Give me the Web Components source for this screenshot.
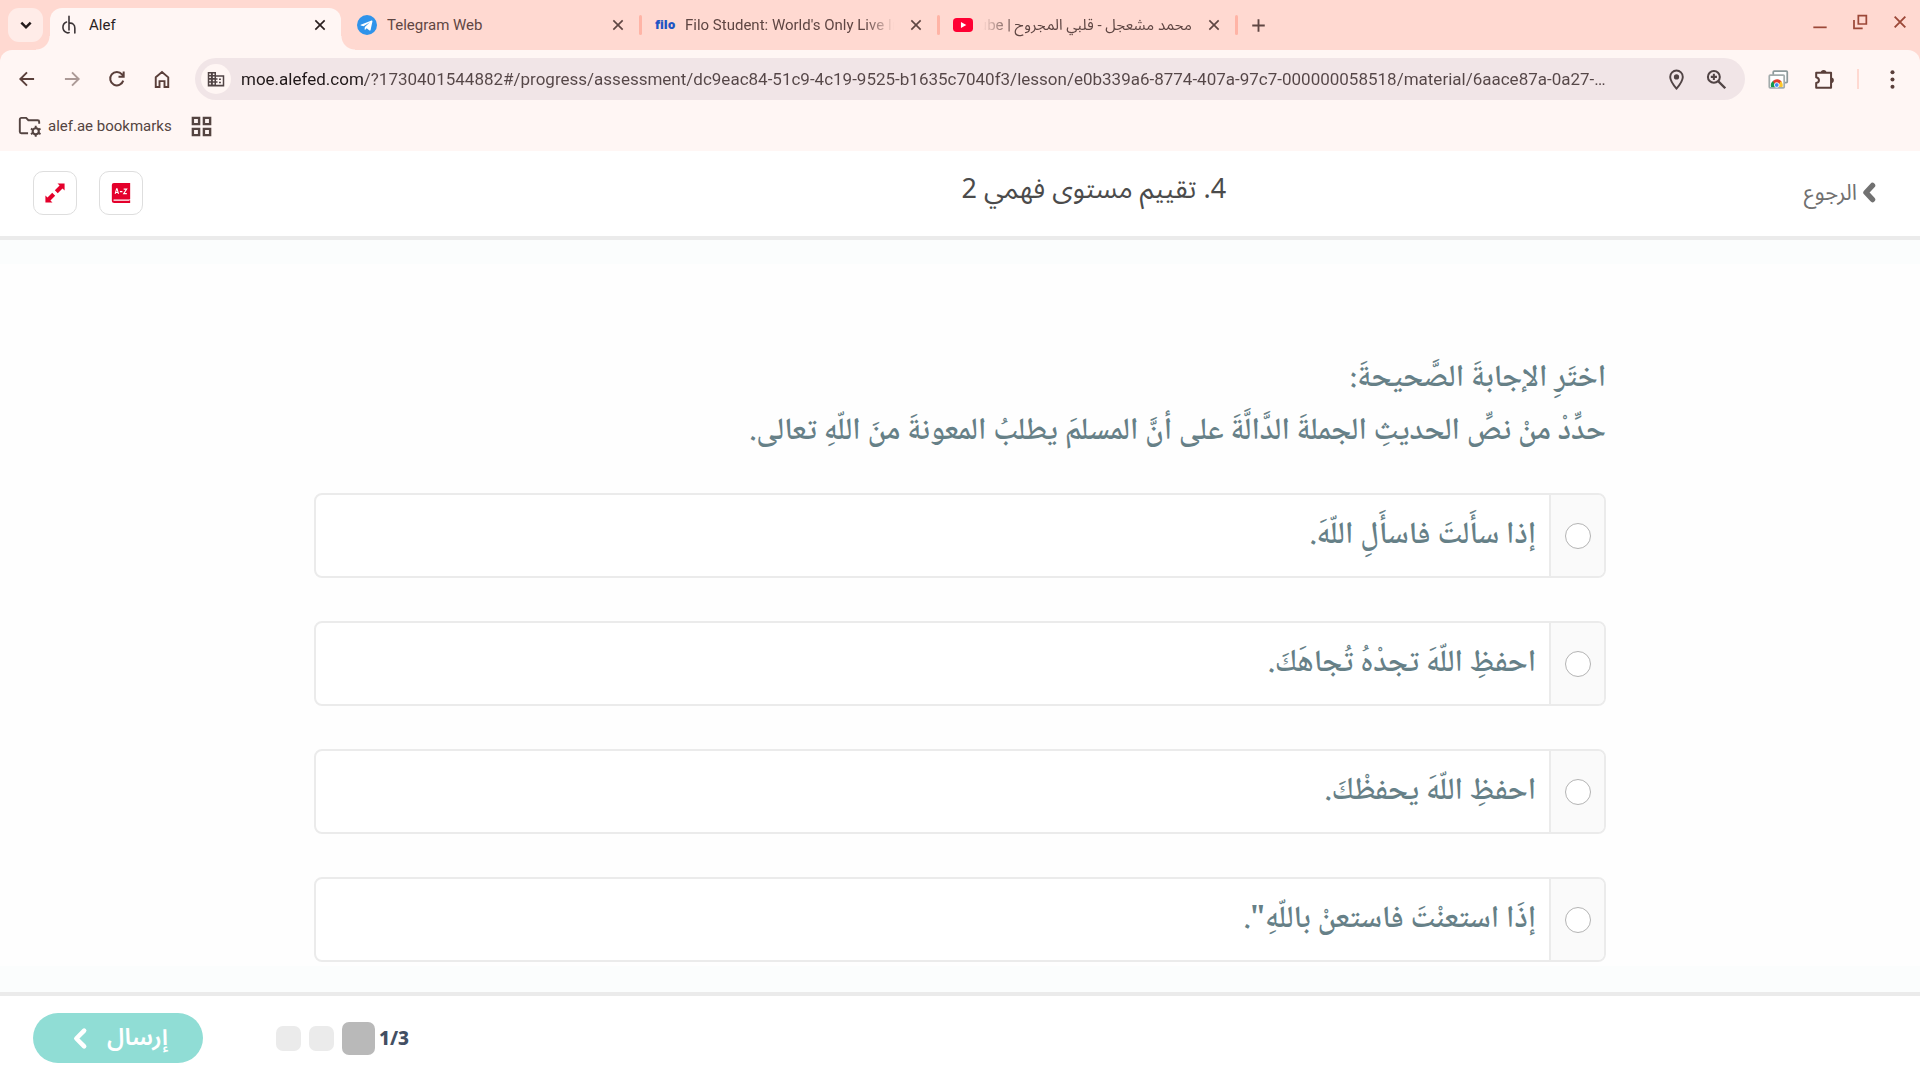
<!DOCTYPE html>
<html lang="ar">
<head>
<meta charset="utf-8">
<meta name="viewport" content="width=device-width, initial-scale=1">
<title>Alef</title>
<style>
  html, body { height: 100%; margin: 0; }
  body { font-family: Roboto, "Noto Sans Arabic", "DejaVu Sans", sans-serif; background: #fefefe; }
</style>
</head>
<body>
<alef-window></alef-window>

<script>
const ICONS = {
  chevronDown: '<path d="M5 8.500l7 7 7-7" fill="none" stroke="currentColor" stroke-width="3.800"/>',
  close: '<path d="M4 4l16 16M20 4L4 20" fill="none" stroke="currentColor" stroke-width="2.800"/>',
  plus: '<path d="M12 2v20M2 12h20" fill="none" stroke="currentColor" stroke-width="3"/>',
  alef: '<path d="M12 1.500v16.500M9 8.500a6.700 6.700 0 0 0 0 12.500c1 .5 2.200.5 3.200 0M12 10c4.500-1 7 2 7 5.500v6" fill="none" stroke="#3b3436" stroke-width="1.900" stroke-linecap="round"/>',
  telegram: '<circle cx="12" cy="12" r="12" fill="#2f93ea"/><path d="M4.500 11.800l13-5.300c.7-.2 1.200.2 1 1.200l-2.200 10.200c-.2.9-.7 1-1.400.6l-3.300-2.500-1.700 1.600c-.4.3-.8.2-.8-.4l.3-2.900 6-5.500-7.500 4.700-3.200-1c-.7-.2-.7-.5-.2-.7z" fill="#fff"/>',
  youtube: '<rect x="0" y="3.500" width="24" height="17" rx="4.500" fill="#ff0033"/><path d="M9.500 8.300v7.400l6.500-3.700z" fill="#fff"/>',
  minimize: '<path d="M2 20h20" stroke="currentColor" stroke-width="2.600"/>',
  restore: '<path d="M9.500 2.500h12v12.500h-12zM3 9v12.500h13" fill="none" stroke="currentColor" stroke-width="2.600"/>',
  back: '<path d="M20.500 12H4M12 4L4 12l8 8" fill="none" stroke="currentColor" stroke-width="2.300"/>',
  forward: '<path d="M3.500 12H20M12 4l8 8-8 8" fill="none" stroke="currentColor" stroke-width="2.300"/>',
  reload: '<path d="M19.500 14A8 8 0 1 1 18 6.500l1.500 1.700M20 3v6.200h-6.200" fill="none" stroke="currentColor" stroke-width="2.400"/>',
  home: '<path d="M4.500 10L12 3.500l7.500 6.500V21.500H15V14.500H9v7H4.500z" fill="none" stroke="currentColor" stroke-width="2.300"/>',
  building: '<path fill-rule="evenodd" fill="currentColor" d="M1 2.500h11V7h11v15H1zm2 2v2h2.200v-2zm0 4.200v2h2.200v-2zm0 4.200v2h2.200v-2zm0 4.200v2.200h2.200v-2.200zm4.800-12.600v2H10v-2zm0 4.200v2H10v-2zm0 4.200v2H10v-2zm0 4.200v2.200H10v-2.200zM12 9v2h2v2h-2v2h2v2h-2v2.800h9V9zm4 2.300h2.500v2H16zm0 4.200h2.500v2H16z"/>',
  pin: '<path d="M12 22.300C7.500 17 4.800 13 4.800 9a7.200 7.200 0 0 1 14.400 0c0 4-2.700 8-7.200 13.300z" fill="none" stroke="currentColor" stroke-width="2.200"/><circle cx="12" cy="9" r="3" fill="currentColor"/>',
  zoom: '<circle cx="9" cy="9" r="6.800" fill="none" stroke="currentColor" stroke-width="2.300"/><path d="M9 5.500v7M5.500 9h7" stroke="currentColor" stroke-width="2.300"/><path d="M14 14l8 8" stroke="currentColor" stroke-width="2.800"/>',
  tabs: '<rect x="6" y="2.500" width="16" height="13" rx="1" fill="#fff" stroke="#8d9a9b" stroke-width="2"/><rect x="1.500" y="7" width="17" height="14.500" rx="1" fill="#fff" stroke="#a3acac" stroke-width="2"/><path d="M3.500 20.500a6.500 6.500 0 0 1 3-7.300l3.300 5v2.300z" fill="#159a4a"/><path d="M5.500 14a6.500 6.500 0 0 1 10 .2l-2 3.300H8z" fill="#e23d2e"/><path d="M15 14a6.500 6.500 0 0 1 1.500 6.500h-5l2-5z" fill="#fcc62b"/><circle cx="10" cy="18.300" r="2.700" fill="#438af5" stroke="#fff" stroke-width="1"/>',
  puzzle: '<path d="M2.500 4.300h17v17H2.500v-5.200c4.200-1 4.200-5.600 0-6.600z" fill="none" stroke="currentColor" stroke-width="2.300" stroke-linejoin="round"/><path d="M7.800 4.300a3.200 3.200 0 0 1 6.400 0zM19.500 9.600a3.200 3.200 0 0 1 0 6.400z" fill="currentColor"/>',
  dots: '<circle cx="12" cy="3.600" r="2.300" fill="currentColor"/><circle cx="12" cy="12" r="2.300" fill="currentColor"/><circle cx="12" cy="20.400" r="2.300" fill="currentColor"/>',
  folder: '<path d="M10.500 19H3.500a1.600 1.600 0 0 1-1.600-1.600V4.600A1.600 1.600 0 0 1 3.500 3h5l2.300 2.500h9.700a1.600 1.600 0 0 1 1.600 1.600v2" fill="none" stroke="currentColor" stroke-width="2"/><circle cx="18.500" cy="17" r="3.200" fill="none" stroke="currentColor" stroke-width="2.200"/><path d="M18.500 11.300v2.200M18.500 20.500v2.200M13.500 14.200l2 1.200M21.500 18.700l2 1.200M13.500 19.900l2-1.200M21.500 15.400l2-1.200" stroke="currentColor" stroke-width="2"/>',
  apps: '<path d="M3 3h6.500v6.500H3zM14.500 3H21v6.500h-6.500zM3 14.500h6.500V21H3zM14.500 14.500H21V21h-6.500z" fill="none" stroke="currentColor" stroke-width="2.500"/>',
  expand: '<path d="M15 .500h8.500V9L21 6.500l-5.700 5.700-3.500-3.500L17.500 3zM.500 15L3 17.500l5.700-5.700 3.500 3.500L6.500 21 9 23.500H.500z" fill="currentColor"/><path d="M8.500 8.500l7 7" stroke="#fff" stroke-width="2.200"/>',
  dictionary: '<path d="M3.500 0H23v19.500h-1v1.300h1V24H4a3 3 0 0 1-3-3V2.500A2.500 2.500 0 0 1 3.500 0z" fill="currentColor"/><path d="M3.500 19.800H22v1.400H3.500a.7.7 0 0 1 0-1.400z" fill="#fff"/><path d="M5 13l1.700-6h.6L9 13M5.600 11.300h2.800M10.700 10.300h3M15.200 7.300h3.600l-3.600 5.400h3.800" fill="none" stroke="#fff" stroke-width="1.300"/>',
  angleLeft: '<path d="M15.500 4.500L8 12l7.500 7.500" fill="none" stroke="currentColor" stroke-width="4.400" stroke-linecap="round" stroke-linejoin="round"/>'
};

class UiIcon extends HTMLElement {
  constructor() {
    super();
    this.attachShadow({ mode: "open" });
  }

  connectedCallback() {
    this.shadowRoot.innerHTML =
      "<style>:host { display: inline-flex; flex: none; width: 20px; height: 20px; } svg { width: 100%; height: 100%; display: block; }</style>" +
      '<svg viewBox="0 0 24 24" aria-hidden="true">' + (ICONS[this.getAttribute("name")] || "") + "</svg>";
  }
}
customElements.define("ui-icon", UiIcon);

class BrowserTab extends HTMLElement {
  constructor() {
    super();
    this.attachShadow({ mode: "open" });
    this.shadowRoot.innerHTML = `
      <style>
        :host { display: flex; flex: 0 1 298px; min-width: 0; box-sizing: border-box; position: relative;
          padding: 8px 13px 0 14px; color: #5f4643; font-size: 15px; }
        .body { display: flex; flex: 1; min-width: 0; align-items: center; height: 34px; position: relative; }
        ::slotted([slot="icon"]) { flex: none; width: 20px; }
        .title { flex: 1; min-width: 0; margin: 0 12px 0 10px; line-height: 24px; overflow: hidden; white-space: nowrap; }
        :host([fade]) .title { -webkit-mask-image: linear-gradient(90deg, #000 86%, transparent); mask-image: linear-gradient(90deg, #000 86%, transparent); }
        :host([fade="start"]) .title { direction: rtl; -webkit-mask-image: linear-gradient(270deg, #000 86%, transparent); mask-image: linear-gradient(270deg, #000 86%, transparent); }
        button { flex: none; width: 20px; height: 20px; padding: 0; border: 0; background: none; color: inherit;
          display: grid; place-items: center; }
        button ui-icon { width: 14px; height: 14px; }
        :host([divider])::after { content: ""; position: absolute; right: -1px; top: 15px; width: 3px; height: 20px; background: #ffb4a6; border-radius: 2px; }
        .plate { display: none; }
        :host([active]) { color: #2a1f1f; }
        :host([active]) .plate { display: block; position: absolute; inset: 8px 2px 0 5px; background: #fff6f4; border-radius: 12px 12px 0 0; }
        .plate::before, .plate::after { content: ""; position: absolute; bottom: 0; width: 14px; height: 14px; }
        .plate::before { right: 100%; background: radial-gradient(circle at 0 0, transparent 13px, #fff6f4 14px); }
        .plate::after { left: 100%; background: radial-gradient(circle at 100% 0, transparent 13px, #fff6f4 14px); }
      </style>
      <div class="plate"></div>
      <div class="body">
        <slot name="icon"></slot>
        <div class="title"><slot></slot></div>
        <button type="button" aria-label="Close tab"><ui-icon name="close"></ui-icon></button>
      </div>`;
  }
}
customElements.define("browser-tab", BrowserTab);

class TabStrip extends HTMLElement {
  constructor() {
    super();
    this.attachShadow({ mode: "open" });
    this.shadowRoot.innerHTML = `
      <style>
        :host { display: flex; height: 50px; background: #ffd9d1; }
        button { padding: 0; border: 0; background: none; color: #5f4643; display: grid; place-items: center; flex: none; }
        .search { width: 35px; height: 34px; margin: 8px 2px 0 8px; border-radius: 11px; background: #ffece8; color: #241a1a; }
        .search ui-icon { width: 16px; height: 16px; }
        .new { width: 42px; height: 34px; margin-top: 8px; }
        .new ui-icon { width: 15px; height: 15px; }
        .filo { color: #1f55c4; font: 800 12px/20px "Open Sans", sans-serif; }
        .window { display: flex; gap: 24px; margin-left: auto; padding: 14px 12px 0 0; align-items: flex-start; }
        .window button { color: #9c4838; width: 16px; height: 16px; }
        .window ui-icon { width: 16px; height: 16px; }
      </style>
      <button class="search" type="button" aria-label="Search tabs"><ui-icon name="chevronDown"></ui-icon></button>
      <browser-tab active><ui-icon slot="icon" name="alef"></ui-icon>Alef</browser-tab>
      <browser-tab divider><ui-icon slot="icon" name="telegram"></ui-icon>Telegram Web</browser-tab>
      <browser-tab divider fade><span slot="icon" class="filo">filo</span>Filo Student: World's Only Live In</browser-tab>
      <browser-tab divider fade="start"><ui-icon slot="icon" name="youtube"></ui-icon>محمد مشعجل - قلبي المجروح | ube</browser-tab>
      <button class="new" type="button" aria-label="New tab"><ui-icon name="plus"></ui-icon></button>
      <div class="window">
        <button type="button" aria-label="Minimize"><ui-icon name="minimize"></ui-icon></button>
        <button type="button" aria-label="Restore"><ui-icon name="restore"></ui-icon></button>
        <button type="button" aria-label="Close"><ui-icon name="close"></ui-icon></button>
      </div>`;
  }
}
customElements.define("tab-strip", TabStrip);

class BrowserToolbar extends HTMLElement {
  constructor() {
    super();
    this.attachShadow({ mode: "open" });
    this.shadowRoot.innerHTML = `
      <style>
        :host { display: block; background: #ffd9d1; }
        .panel { background: #fff6f4; border-radius: 12px 12px 0 0; height: 101px; box-sizing: border-box; padding-top: 8px; }
        .row { display: flex; align-items: center; height: 42px; padding: 0 17px 0 16px; color: #5a3f3a; }
        button { padding: 0; border: 0; background: none; color: inherit; display: grid; place-items: center; }
        .nav { display: flex; gap: 23px; margin-right: 22px; }
        .nav button { width: 22px; height: 22px; }
        .off { opacity: 0.5; }
        .box { flex: 1; min-width: 0; height: 42px; border-radius: 21px; background: #f1e5e7; display: flex; align-items: center;
          box-sizing: border-box; padding: 0 18px 0 6px; color: #514445; }
        .site { width: 30px; height: 30px; border-radius: 50%; background: #fff6f4; }
        .site ui-icon { width: 18px; height: 18px; }
        input { flex: 1; min-width: 0; height: 24px; margin: 0 20px 0 10px; padding: 0; border: 0; outline: 0; font: 17px/24px Roboto, sans-serif;
          -webkit-text-fill-color: transparent; background: linear-gradient(90deg, #1f1718 124px, #554647 124px); -webkit-background-clip: text; background-clip: text; }
        .actions { display: flex; gap: 18px; }
        .actions button { width: 22px; height: 22px; }
        .actions ui-icon { width: 21px; height: 21px; }
        .tools { display: flex; align-items: center; gap: 24px; margin-left: 22px; }
        .tools button { width: 22px; height: 22px; }
        .tools ui-icon { width: 21px; height: 21px; }
        .rule { width: 2px; height: 20px; background: #ffd9d1; margin: 0 -2px; }
        .bookmarks { display: flex; align-items: center; gap: 18px; height: 50px; padding: 1px 18px 0; color: #544441; font-size: 15px; }
        .bookmarks a { display: flex; align-items: center; gap: 7px; color: inherit; text-decoration: none; line-height: 24px; }
        .bookmarks ui-icon { width: 23px; height: 23px; }
      </style>
      <div class="panel">
        <div class="row">
          <div class="nav">
            <button type="button" aria-label="Back"><ui-icon name="back"></ui-icon></button>
            <button type="button" class="off" aria-label="Forward"><ui-icon name="forward"></ui-icon></button>
            <button type="button" aria-label="Reload"><ui-icon name="reload"></ui-icon></button>
            <button type="button" aria-label="Home"><ui-icon name="home"></ui-icon></button>
          </div>
          <div class="box">
            <button class="site" type="button" aria-label="Site information"><ui-icon name="building"></ui-icon></button>
            <input type="text" aria-label="Address" spellcheck="false" value="moe.alefed.com/?1730401544882#/progress/assessment/dc9eac84-51c9-4c19-9525-b1635c7040f3/lesson/e0b339a6-8774-407a-97c7-000000058518/material/6aace87a-0a27-…">
            <div class="actions">
              <button type="button" aria-label="Location"><ui-icon name="pin"></ui-icon></button>
              <button type="button" aria-label="Zoom"><ui-icon name="zoom"></ui-icon></button>
            </div>
          </div>
          <div class="tools">
            <button type="button" aria-label="Tab groups"><ui-icon name="tabs"></ui-icon></button>
            <button type="button" aria-label="Extensions"><ui-icon name="puzzle"></ui-icon></button>
            <span class="rule"></span>
            <button type="button" aria-label="Menu"><ui-icon name="dots"></ui-icon></button>
          </div>
        </div>
        <div class="bookmarks">
          <a href="#bookmarks"><ui-icon name="folder"></ui-icon>alef.ae bookmarks</a>
          <a href="#apps" aria-label="Apps"><ui-icon name="apps"></ui-icon></a>
        </div>
      </div>`;
  }
}
customElements.define("browser-toolbar", BrowserToolbar);

class LessonHeader extends HTMLElement {
  constructor() {
    super();
    this.attachShadow({ mode: "open" });
    this.shadowRoot.innerHTML = `
      <style>
        :host { display: grid; grid-template-columns: 7fr auto 10fr; align-items: center; direction: rtl; height: 83px;
          flex: none; padding: 0 44px 2px 33px; background: #fff; border-bottom: 4px solid #ebebeb;
          font-family: "Noto Sans Arabic", "DejaVu Sans", sans-serif; }
        a { display: flex; align-items: center; gap: 5px; color: #717171; font-size: 22px; line-height: 32px; text-decoration: none; justify-self: start; }
        h1 { margin: 0; padding-bottom: 6px; font-size: 27px; font-weight: 400; line-height: 40px; color: #4b4b4b; }
        .tools { display: flex; gap: 22px; justify-self: end; direction: ltr; }
        button { width: 44px; height: 44px; padding: 0; border: 1px solid #dedede; border-radius: 10px; background: #fff; color: #e4002b;
          display: grid; place-items: center; }
        svg { width: 14px; height: 21px; }
      </style>
      <a href="#back"><svg viewBox="0 0 14 21" aria-hidden="true"><path d="M10.500 3.500L4 10.500l6.500 7" fill="none" stroke="currentColor" stroke-width="5.500" stroke-linecap="round" stroke-linejoin="round"/></svg>الرجوع</a>
      <h1><slot></slot></h1>
      <div class="tools">
        <button type="button" aria-label="Full screen"><ui-icon name="expand"></ui-icon></button>
        <button type="button" aria-label="Dictionary"><ui-icon name="dictionary"></ui-icon></button>
      </div>`;
  }
}
customElements.define("lesson-header", LessonHeader);

class AnswerOption extends HTMLElement {
  constructor() {
    super();
    this.attachShadow({ mode: "open" });
    this.shadowRoot.innerHTML = `
      <style>
        :host { display: block; }
        label { display: flex; height: 81px; border: 2px solid #ebebeb; border-radius: 8px; background: #fff; overflow: hidden; }
        .pick { display: grid; place-items: center; flex: none; width: 53px; background: #fafafa; border-left: 2px solid #ebebeb; }
        input { appearance: none; -webkit-appearance: none; width: 26px; height: 26px; margin: 0; border: 1px solid #b4b4b4; border-radius: 50%; background: #fff; }
        input:checked { background: radial-gradient(#8eddd5 8px, #fff 9px); }
        .text { flex: 1; padding: 18px 13px 0; line-height: 48px; }
      </style>
      <label>
        <span class="pick"><input type="radio" name="answer"></span>
        <span class="text"><slot></slot></span>
      </label>`;
  }
}
customElements.define("answer-option", AnswerOption);

class QuestionPanel extends HTMLElement {
  constructor() {
    super();
    this.attachShadow({ mode: "open" });
    this.shadowRoot.innerHTML = `
      <style>
        :host { display: block; flex: 1; min-height: 0; overflow: hidden; direction: rtl; box-sizing: border-box; padding: 113px 24px 0; color: #668087;
          background: linear-gradient(#fbfdfd, #fbfdfd) top / 100% 24px no-repeat, linear-gradient(#fbfdfd, #fbfdfd) bottom / 100% 26px no-repeat, #fefefe;
          font: 600 31px/53px "Noto Naskh Arabic", "DejaVu Sans", serif; }
        .column { max-width: 1292px; margin: 0 auto; }
        .options { display: flex; flex-direction: column; gap: 43px; margin-top: 34px; }
      </style>
      <div class="column">
        <slot name="question"></slot>
        <div class="options" role="radiogroup"><slot></slot></div>
      </div>`;
  }
}
customElements.define("question-panel", QuestionPanel);

class LessonFooter extends HTMLElement {
  constructor() {
    super();
    this.attachShadow({ mode: "open" });
    this.shadowRoot.innerHTML = `
      <style>
        :host { display: flex; align-items: center; gap: 73px; height: 84px; flex: none; box-sizing: content-box; padding: 0 33px; background: #fff; border-top: 4px solid #ebebeb; }
        .send { display: flex; align-items: center; justify-content: center; gap: 14px; width: 170px; height: 50px; padding: 0; border: 0; border-radius: 25px;
          background: #90ddd5; color: #fff; font: 600 24px/40px "Noto Sans Arabic", "DejaVu Sans", sans-serif; }
        .send ui-icon { width: 25px; height: 25px; }
        .steps { display: flex; align-items: center; gap: 8px; }
        .steps i { width: 25px; height: 25px; border-radius: 7px; background: #ebebeb; }
        .steps i.on { width: 33px; height: 33px; background: #b9b9b9; }
        .steps b { margin-left: -4px; color: #434f63; font: 800 19px/24px "Noto Sans", sans-serif; }
      </style>
      <button class="send" type="button"><ui-icon name="angleLeft"></ui-icon>إرسال</button>
      <div class="steps"><i></i><i></i><i class="on"></i><b>1/3</b></div>`;
  }
}
customElements.define("lesson-footer", LessonFooter);

class AlefWindow extends HTMLElement {
  constructor() {
    super();
    this.attachShadow({ mode: "open" });
    this.shadowRoot.innerHTML = `
      <style>
        :host { display: flex; flex-direction: column; min-height: 100vh; }
        p { margin: 0; }
      </style>
      <tab-strip></tab-strip>
      <browser-toolbar></browser-toolbar>
      <lesson-header>4. تقييم مستوى فهمي 2</lesson-header>
      <question-panel>
        <p slot="question">اختَرِ الإجابةَ الصَّحيحةَ:</p>
        <p slot="question">حدِّدْ منْ نصِّ الحديثِ الجملةَ الدَّالَّةَ على أنَّ المسلمَ يطلبُ المعونةَ منَ اللّهِ تعالى.</p>
        <answer-option>إذا سأَلتَ فاسأَلِ اللّهَ.</answer-option>
        <answer-option>احفظِ اللّهَ تجدْهُ تُجاهَكَ.</answer-option>
        <answer-option>احفظِ اللّهَ يحفظْكَ.</answer-option>
        <answer-option>إذَا استعنْتَ فاستعنْ باللّهِ".</answer-option>
      </question-panel>
      <lesson-footer></lesson-footer>`;
  }
}
customElements.define("alef-window", AlefWindow);
</script>
</body>
</html>
